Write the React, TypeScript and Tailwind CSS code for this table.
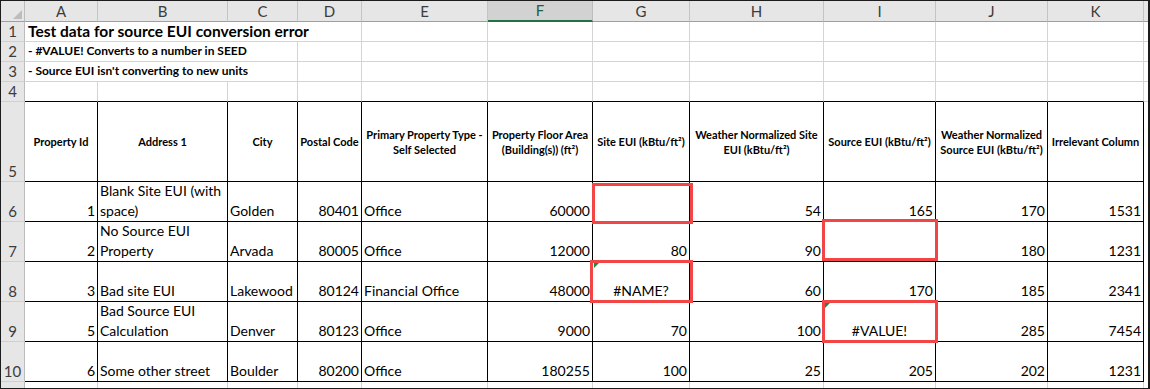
const columns = ["A", "B", "C", "D", "E", "F", "G", "H", "I", "J", "K"];

const headers: string[][] = [
  ["Property Id"],
  ["Address 1"],
  ["City"],
  ["Postal Code"],
  ["Primary Property Type -", "Self Selected"],
  ["Property Floor Area", "(Building(s)) (ft²)"],
  ["Site EUI (kBtu/ft²)"],
  ["Weather Normalized Site", "EUI (kBtu/ft²)"],
  ["Source EUI (kBtu/ft²)"],
  ["Weather Normalized", "Source EUI (kBtu/ft²)"],
  ["Irrelevant Column"],
];

const rows = [
  { n: 6, id: "1", addr: ["Blank Site EUI (with", "space)"], city: "Golden", zip: "80401", type: "Office", area: "60000", site: "", wnSite: "54", source: "165", wnSource: "170", irr: "1531" },
  { n: 7, id: "2", addr: ["No Source EUI", "Property"], city: "Arvada", zip: "80005", type: "Office", area: "12000", site: "80", wnSite: "90", source: "", wnSource: "180", irr: "1231" },
  { n: 8, id: "3", addr: ["Bad site EUI"], city: "Lakewood", zip: "80124", type: "Financial Office", area: "48000", site: "#NAME?", wnSite: "60", source: "170", wnSource: "185", irr: "2341" },
  { n: 9, id: "5", addr: ["Bad Source EUI", "Calculation"], city: "Denver", zip: "80123", type: "Office", area: "9000", site: "70", wnSite: "100", source: "#VALUE!", wnSource: "285", irr: "7454" },
  { n: 10, id: "6", addr: ["Some other street"], city: "Boulder", zip: "80200", type: "Office", area: "180255", site: "100", wnSite: "25", source: "205", wnSource: "202", irr: "1231" },
];

function RowHead({ n }: { n: number | string }) {
  return (
    <div className="flex items-end justify-center bg-[#e6e6e6] border-r border-b border-r-[#bcbcbc] border-b-[#d0d0d0] text-[15px] leading-[20px] text-[#3c3c3c]">
      {n}
    </div>
  );
}

// plain sheet cell with light gridlines
function Blank({ dark = false }: { dark?: boolean }) {
  return (
    <div
      className={`border-r border-b border-r-[#d4d4d4] ${dark ? "border-b-black" : "border-b-[#d4d4d4]"}`}
    />
  );
}

function Cell({
  children,
  align = "left",
}: {
  children?: React.ReactNode;
  align?: "left" | "right" | "center";
}) {
  const justify =
    align === "right" ? "justify-end text-right" : align === "center" ? "justify-center text-center" : "justify-start text-left";
  return (
    <div
      className={`flex items-end ${justify} px-[2px] border-b border-r border-black text-[14px] leading-[20px] text-black whitespace-nowrap overflow-hidden`}
    >
      <div>{children}</div>
    </div>
  );
}

export default function App() {
  return (
    <div className="w-[1150px] h-[389px] bg-white border-t border-b border-l border-r-2 border-[#1c1c1c] font-['Lato','Liberation_Sans',sans-serif] relative overflow-hidden">
      <div className="grid h-full grid-cols-[24px_73px_130px_70px_64px_126px_105px_97px_134px_112px_112px_96px_1fr] grid-rows-[21px_20px_20px_20px_20px_80px_40px_40px_40px_40px_40px_1fr]">
        {/* column header row */}
        <div className="relative bg-[#e6e6e6] border-r border-b border-r-[#bcbcbc] border-b-[#9f9f9f]">
          <svg className="absolute left-0 top-0" width="24" height="20" viewBox="0 0 24 20">
            <polygon points="21,9 21,18 12,18" fill="#bdbdbd" />
          </svg>
        </div>
        {columns.map((c) =>
          c === "F" ? (
            <div
              key={c}
              className="flex items-center justify-center bg-[#d2d2d2] border-r border-r-[#bcbcbc] border-b-2 border-b-[#217346] text-[15px] text-[#1f5f3c]"
            >
              {c}
            </div>
          ) : (
            <div
              key={c}
              className="flex items-center justify-center bg-[#e6e6e6] border-r border-b border-r-[#c4c4c4] border-b-[#9f9f9f] text-[15px] text-[#3c3c3c]"
            >
              {c}
            </div>
          )
        )}
        <div className="bg-[#e6e6e6] border-b border-b-[#9f9f9f]" />

        {/* row 1 */}
        <RowHead n={1} />
        <div className="col-span-4 flex items-end px-[3px] border-r border-b border-[#d4d4d4] text-[15.5px] leading-[20px] font-bold text-black whitespace-nowrap">
          Test data for source EUI conversion error
        </div>
        {columns.slice(4).map((c) => (
          <Blank key={c} />
        ))}
        <div className="border-b border-[#d4d4d4]" />

        {/* row 2 */}
        <RowHead n={2} />
        <div className="col-span-3 flex items-end pb-[2px] px-[3px] border-r border-b border-[#d4d4d4] text-[12px] leading-[16px] font-bold text-black whitespace-nowrap">
          - #VALUE! Converts to a number in SEED
        </div>
        {columns.slice(3).map((c) => (
          <Blank key={c} />
        ))}
        <div className="border-b border-[#d4d4d4]" />

        {/* row 3 */}
        <RowHead n={3} />
        <div className="col-span-3 flex items-end pb-[2px] px-[3px] border-r border-b border-[#d4d4d4] text-[12px] leading-[16px] font-bold text-black whitespace-nowrap">
          - Source EUI isn't converting to new units
        </div>
        {columns.slice(3).map((c) => (
          <Blank key={c} />
        ))}
        <div className="border-b border-[#d4d4d4]" />

        {/* row 4 */}
        <RowHead n={4} />
        {columns.map((c) => (
          <Blank key={c} dark />
        ))}
        <div className="border-b border-[#d4d4d4]" />

        {/* row 5: table header */}
        <RowHead n={5} />
        {headers.map((lines, i) => (
          <div
            key={i}
            className="flex items-center justify-center text-center border-r border-b border-black text-[11px] leading-[15px] font-bold text-black"
          >
            <div>
              {lines.map((l, j) => (
                <div key={j} className="whitespace-nowrap">
                  {l}
                </div>
              ))}
            </div>
          </div>
        ))}
        <div />

        {/* data rows */}
        {rows.map((r) => (
          <div key={r.n} className="contents">
            <RowHead n={r.n} />
            <Cell align="right">{r.id}</Cell>
            <Cell>
              {r.addr.map((l, j) => (
                <div key={j}>{l}</div>
              ))}
            </Cell>
            <Cell>{r.city}</Cell>
            <Cell align="right">{r.zip}</Cell>
            <Cell>{r.type}</Cell>
            <Cell align="right">{r.area}</Cell>
            <Cell align={r.site.startsWith("#") ? "center" : "right"}>{r.site}</Cell>
            <Cell align="right">{r.wnSite}</Cell>
            <Cell align={r.source.startsWith("#") ? "center" : "right"}>{r.source}</Cell>
            <Cell align="right">{r.wnSource}</Cell>
            <Cell align="right">{r.irr}</Cell>
            <div />
          </div>
        ))}

        {/* partial row 11 */}
        <div className="bg-[#e6e6e6] border-r border-r-[#bcbcbc]" />
        {columns.map((c) => (
          <div key={c} className="border-r border-[#d4d4d4]" />
        ))}
        <div />
      </div>

      {/* error indicators */}
      <div className="absolute left-[593px] top-[262px] w-0 h-0 border-t-[5px] border-r-[5px] border-t-[#1e8a3c] border-r-transparent" />
      <div className="absolute left-[824px] top-[302px] w-0 h-0 border-t-[5px] border-r-[5px] border-t-[#1e8a3c] border-r-transparent" />

      {/* red highlight boxes */}
      <div className="absolute left-[591px] top-[182px] w-[101px] h-[41px] border-[3px] border-[#f24646]" />
      <div className="absolute left-[821px] top-[218px] w-[116px] h-[42px] border-[3px] border-[#f24646]" />
      <div className="absolute left-[589px] top-[259px] w-[103px] h-[43px] border-[3px] border-[#f24646]" />
      <div className="absolute left-[821px] top-[299px] w-[116px] h-[43px] border-[3px] border-[#f24646]" />
    </div>
  );
}
